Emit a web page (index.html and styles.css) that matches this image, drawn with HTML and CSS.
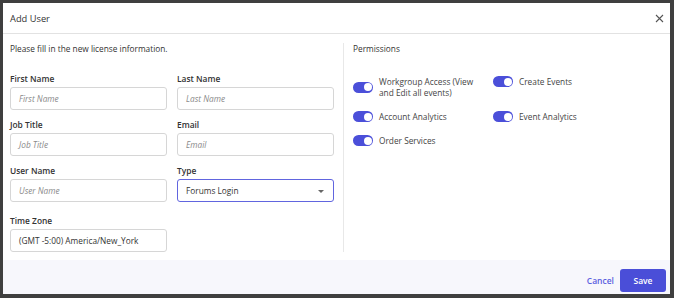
FILE: index.html
```html
<!DOCTYPE html>
<html>
<head>
<meta charset="utf-8">
<link rel="stylesheet" href="styles.css">
</head>
<body>
<div class="modal">
  <div class="header">
    <span class="title">Add User</span>
    <svg class="close" width="9" height="9" viewBox="0 0 9 9"><path d="M1 1L8 8M8 1L1 8" stroke="#555" stroke-width="1.1" fill="none"/></svg>
  </div>
  <div class="body">
    <div class="left">
      <div class="intro">Please fill in the new license information.</div>
      <div class="form">
        <div class="field"><label class="label">First Name</label><div class="input ph">First Name</div></div>
        <div class="field"><label class="label">Last Name</label><div class="input ph">Last Name</div></div>
        <div class="field"><label class="label">Job Title</label><div class="input ph">Job Title</div></div>
        <div class="field"><label class="label">Email</label><div class="input ph">Email</div></div>
        <div class="field"><label class="label">User Name</label><div class="input ph">User Name</div></div>
        <div class="field"><label class="label">Type</label><div class="input select">Forums Login<span class="caret"></span></div></div>
        <div class="field tz"><label class="label">Time Zone</label><div class="input">(GMT -5:00) America/New_York</div></div>
      </div>
    </div>
    <div class="right">
      <div class="perm-title">Permissions</div>
      <div class="perms">
        <div class="perm"><span class="toggle"></span><span class="perm-text wrap">Workgroup Access (View and Edit all events)</span></div>
        <div class="perm"><span class="toggle"></span><span class="perm-text">Create Events</span></div>
        <div class="perm"><span class="toggle"></span><span class="perm-text">Account Analytics</span></div>
        <div class="perm"><span class="toggle"></span><span class="perm-text">Event Analytics</span></div>
        <div class="perm"><span class="toggle"></span><span class="perm-text">Order Services</span></div>
      </div>
    </div>
  </div>
  <div class="footer">
    <span class="cancel">Cancel</span>
    <span class="save">Save</span>
  </div>
</div>
</body>
</html>
```
FILE: styles.css
```css
html, body { margin: 0; padding: 0; }
body {
  background: #3f3f3f;
  font-family: "Open Sans", "Noto Sans", sans-serif;
  color: #333;
  width: 674px;
  height: 298px;
  overflow: hidden;
}
.modal {
  margin: 3px 4px 4px 3px;
  height: 291px;
  background: #fff;
  display: flex;
  flex-direction: column;
}
.header {
  height: 30px;
  border-bottom: 1px solid #e2e2e2;
  display: flex;
  align-items: center;
  justify-content: space-between;
  padding: 0 6px 0 7px;
}
.title { font-size: 9.3px; color: #333; }
.close { display: block; }
.body {
  height: 226px;
  display: flex;
}
.left {
  width: 333px;
  padding-left: 7px;
  margin: 9px 0 8px 0;
  border-right: 1px solid #e8e8e8;
}
.intro { font-size: 8.3px; line-height: 11px; color: #333; }
.form {
  margin-top: 19px;
  display: grid;
  grid-template-columns: 157px 157px;
  column-gap: 10px;
  row-gap: 9px;
}
.field { display: flex; flex-direction: column; }
.field.tz { margin-top: 4px; }
.label {
  font-size: 8.4px;
  font-weight: 600;
  line-height: 12px;
  color: #333;
  margin-bottom: 2px;
}
.input {
  box-sizing: border-box;
  height: 23px;
  border: 1px solid #d6d6d6;
  border-radius: 3px;
  padding-left: 8px;
  display: flex;
  align-items: center;
  font-size: 8.3px;
  color: #333;
}
.input.ph { font-style: italic; color: #8a8a8a; }
.input.select {
  border-color: #6165df;
  position: relative;
}
.caret {
  position: absolute;
  right: 9px;
  top: 10px;
  width: 0; height: 0;
  border-left: 3px solid transparent;
  border-right: 3px solid transparent;
  border-top: 3px solid #666;
}
.right {
  padding: 9px 0 0 9px;
  flex: 1;
}
.perm-title { font-size: 8.3px; line-height: 11px; color: #333; }
.perms {
  margin-top: 22px;
  display: grid;
  grid-template-columns: 140px auto;
  row-gap: 13px;
  align-items: start;
}
.perm { display: flex; align-items: center; }
.toggle {
  flex: none;
  width: 20px;
  height: 11px;
  border-radius: 6px;
  background: #4b4fd9;
  position: relative;
  margin-right: 6px;
}
.toggle::after {
  content: "";
  position: absolute;
  right: 1.5px;
  top: 1.5px;
  width: 8px;
  height: 8px;
  border-radius: 50%;
  background: #fff;
}
.perm-text { font-size: 8.3px; line-height: 11px; color: #444; }
.perm-text.wrap { width: 98px; }
.footer {
  flex: 1;
  background: #f7f7fc;
  display: flex;
  justify-content: flex-end;
  align-items: flex-end;
  padding: 0 4px 2px 0;
  gap: 6px;
}
.cancel {
  font-size: 8.5px;
  font-weight: 600;
  color: #5a5ee0;
  height: 23px;
  line-height: 23px;
}
.save {
  width: 46px;
  height: 23px;
  border-radius: 3px;
  background: #4a4ed8;
  color: #fff;
  font-size: 8.5px;
  font-weight: 600;
  display: flex;
  align-items: center;
  justify-content: center;
}
```
